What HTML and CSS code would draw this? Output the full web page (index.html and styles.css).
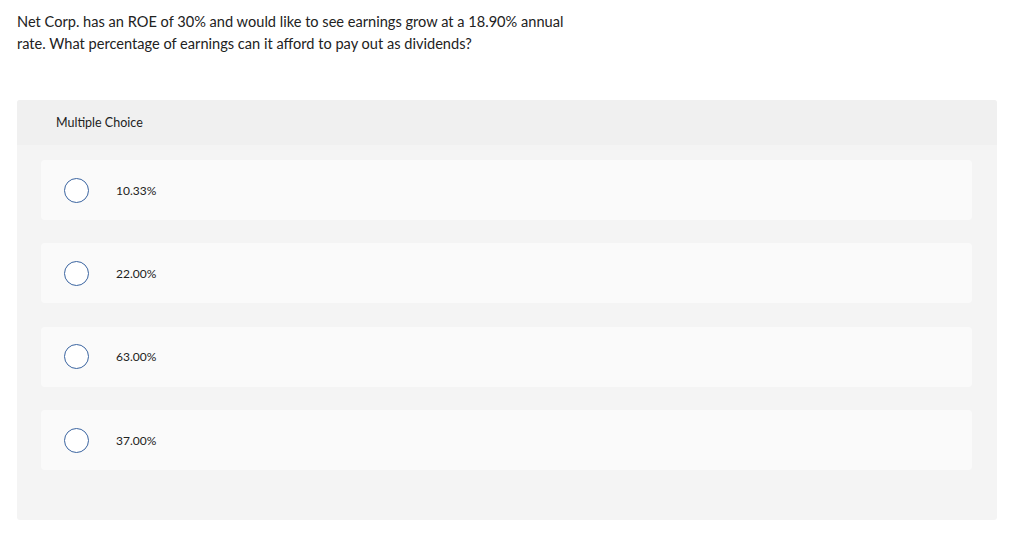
FILE: index.html
```html
<!DOCTYPE html>
<html>
<head>
<meta charset="utf-8">
<link rel="stylesheet" href="styles.css">
</head>
<body>
<div class="question">
  <p class="prompt">Net Corp. has an ROE of 30% and would like to see earnings grow at a 18.90% annual<br>rate. What percentage of earnings can it afford to pay out as dividends?</p>
</div>
<div class="panel">
  <div class="panel-header">Multiple Choice</div>
  <div class="options">
    <div class="option"><span class="radio"></span><span class="label">10.33%</span></div>
    <div class="option"><span class="radio"></span><span class="label">22.00%</span></div>
    <div class="option"><span class="radio"></span><span class="label">63.00%</span></div>
    <div class="option"><span class="radio"></span><span class="label">37.00%</span></div>
  </div>
</div>
</body>
</html>
```
FILE: styles.css
```css
html, body { margin: 0; padding: 0; background: #fff; }
body {
  font-family: "Lato", "Open Sans", sans-serif;
  color: #333;
  padding: 11px 27px 0 17px;
}
.prompt {
  margin: 0;
  font-size: 14.6px;
  line-height: 22px;
  color: #222;
}
.panel {
  margin-top: 45px;
  background: #f4f4f4;
  border-radius: 3px;
  overflow: hidden;
  padding-bottom: 50px;
}
.panel-header {
  background: #f0f0f0;
  height: 45px;
  display: flex;
  align-items: center;
  padding-left: 39px;
  font-size: 12.5px;
  color: #222;
}
.options {
  padding: 15px 25px 0 24px;
  display: flex;
  flex-direction: column;
  gap: 23.4px;
}
.option {
  background: #fafafa;
  border-radius: 4px;
  height: 60px;
  display: flex;
  align-items: center;
  padding-left: 23px;
}
.radio {
  width: 25px;
  height: 25px;
  border: 1px solid #3a64a0;
  border-radius: 50%;
  background: #fff;
  box-sizing: border-box;
  flex: none;
}
.label {
  margin-left: 27px;
  font-size: 12px;
  color: #222;
}
```
